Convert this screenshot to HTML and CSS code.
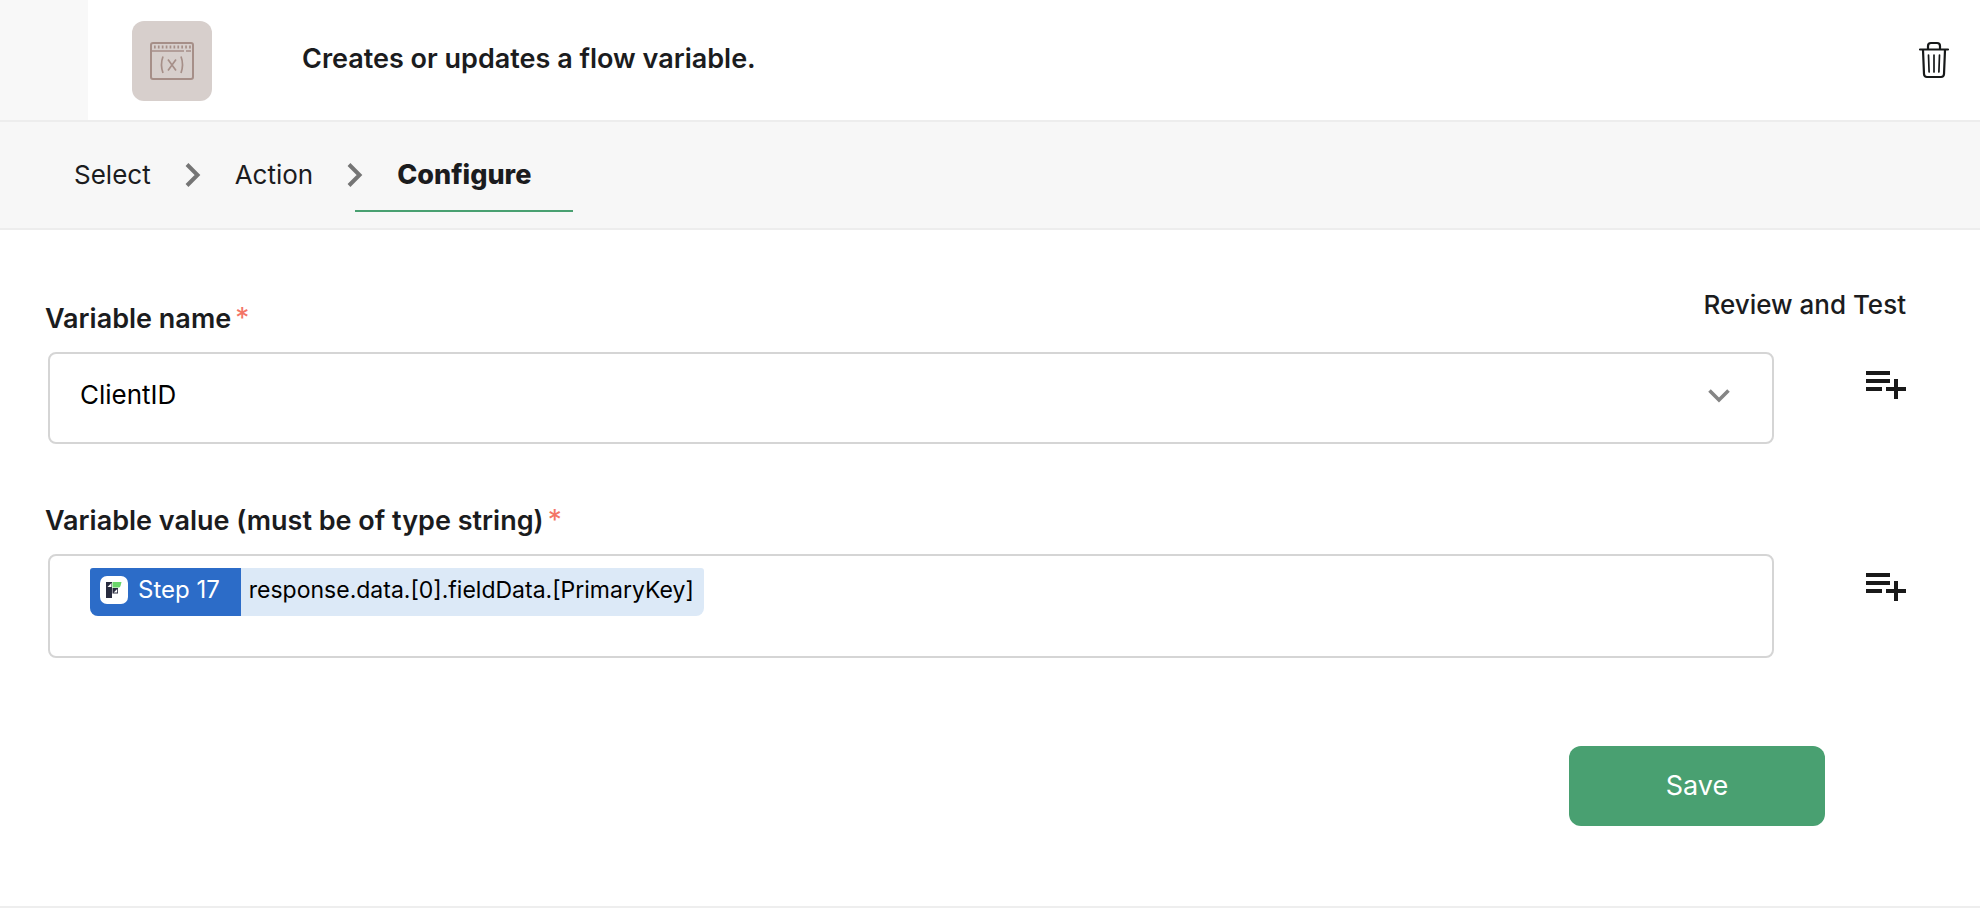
FILE: index.html
```html
<!DOCTYPE html>
<html lang="en">
<head>
<meta charset="utf-8">
<meta name="viewport" content="width=device-width, initial-scale=1">
<title>Configure flow variable</title>
<link rel="stylesheet" href="styles.css">
</head>
<body>
<div class="panel">
  <header class="header">
    <div class="gutter"></div>
    <div class="header-main">
      <div class="app-icon">
        <svg viewBox="0 0 80 80" width="80" height="80" fill="none" stroke="#a68f88" stroke-width="2" aria-hidden="true">
          <rect x="19" y="22" width="42" height="36" rx="2"/>
          <path d="M19 30h33M54 30h5" stroke-width="1.6"/>
          <path d="M22 26h37" stroke-width="3" stroke-dasharray="1.7 2.2"/>
          <path d="M31 35.500q-3 8 0 16.500M49 35.500q3 8 0 16.500M36 38.500l8 11M44 38.500l-8 11" stroke-width="1.700"/>
        </svg>
      </div>
      <h1 class="title">Creates or updates a flow variable.</h1>
      <button class="icon-button" type="button" aria-label="Delete step">
        <svg viewBox="0 1 32 40" width="32" height="40" fill="none" stroke="#161819" stroke-width="2.200" stroke-linecap="round" stroke-linejoin="round" aria-hidden="true">
          <path d="M2 9.500h28M10 9V6q0-3 3-3h6q3 0 3 3v3M5 10l1 24q.2 3 3 3h14q2.800 0 3-3l1-24"/>
          <path d="M10.500 15l.6 17M16 15v17M21.500 15l-.6 17" stroke-width="1.700"/>
        </svg>
      </button>
    </div>
  </header>

  <nav class="steps" aria-label="Setup steps">
    <ol class="step-list">
      <li class="step"><a class="step-link" href="#select">Select</a>
        <svg class="step-arrow" viewBox="0 0 16 24" width="16" height="24" aria-hidden="true"><path d="M2 1.500l10.500 10.500L2 22.500" fill="none" stroke="#757575" stroke-width="4"/></svg>
      </li>
      <li class="step"><a class="step-link" href="#action">Action</a>
        <svg class="step-arrow" viewBox="0 0 16 24" width="16" height="24" aria-hidden="true"><path d="M2 1.500l10.500 10.500L2 22.500" fill="none" stroke="#757575" stroke-width="4"/></svg>
      </li>
      <li class="step"><a class="step-link current" href="#configure" aria-current="step">Configure</a></li>
    </ol>
  </nav>

  <form class="form">
    <div class="field-head">
      <label class="label" for="variable-name">Variable name<span class="required">*</span></label>
      <a class="review" href="#review">Review and Test</a>
    </div>
    <div class="field-row">
      <div class="control">
        <select class="box select" id="variable-name"><option>ClientID</option></select>
        <svg class="select-arrow" viewBox="0 0 22 14" width="22" height="14" aria-hidden="true"><path d="M1.500 1.500L11 11l9.500-9.500" fill="none" stroke="#858585" stroke-width="3.600"/></svg>
      </div>
      <button class="icon-button" type="button" aria-label="Insert data into variable name">
        <svg viewBox="0 0 24 24" width="48" height="48" fill="#191919" aria-hidden="true"><path d="M14 10H2v2h12v-2zm0-4H2v2h12V6zm4 8v-4h-2v4h-4v2h4v4h2v-4h4v-2h-4zM2 16h8v-2H2v2z"/></svg>
      </button>
    </div>

    <div class="field-head second">
      <span class="label" id="value-label">Variable value (must be of type string)<span class="required">*</span></span>
    </div>
    <div class="field-row">
      <div class="box value" role="textbox" tabindex="0" aria-labelledby="value-label">
        <span class="token">
          <span class="token-step">
            <svg viewBox="0 0 28 28" width="28" height="28" aria-hidden="true">
              <rect width="28" height="28" rx="7" fill="#fff"/>
              <path d="M6 6h6v16H6zM12.500 12h5.500v5.500h-5.500z" fill="#282b3e"/>
              <path d="M11.500 7v4h-4z" fill="#fff"/>
              <path d="M17.200 13v3.500h-3.500z" fill="#fff"/>
              <path d="M12.500 6h9l-1 4q-.5 1.500-2 1.500h-6z" fill="#6bd66b"/>
            </svg>
            <span>Step 17</span>
          </span>
          <span class="token-path">response.data.[0].fieldData.[PrimaryKey]</span>
        </span>
      </div>
      <button class="icon-button" type="button" aria-label="Insert data into variable value">
        <svg viewBox="0 0 24 24" width="48" height="48" fill="#191919" aria-hidden="true"><path d="M14 10H2v2h12v-2zm0-4H2v2h12V6zm4 8v-4h-2v4h-4v2h4v4h2v-4h4v-2h-4zM2 16h8v-2H2v2z"/></svg>
      </button>
    </div>

    <div class="actions"><button class="save" type="submit">Save</button></div>
  </form>
</div>
</body>
</html>
```

FILE: styles.css
```css
* {
  box-sizing: border-box;
}

body {
  margin: 0;
  background: #fff;
  color: #1b1c1e;
  font-family: Inter, "Liberation Sans", sans-serif;
  font-size: 27px;
  line-height: 32px;
}

button,
select {
  font: inherit;
  color: inherit;
}

a {
  color: inherit;
  text-decoration: none;
}

svg {
  display: block;
}

.panel {
  border-bottom: 2px solid #eee;
}

.header {
  display: flex;
  border-bottom: 2px solid #ededed;
}

.gutter {
  width: 88px;
  background: #f8f8f8;
}

.header-main {
  flex: 1;
  display: flex;
  align-items: center;
  padding: 21px 30px 19px 44px;
}

.app-icon {
  border-radius: 12px;
  background: #d7cfcc;
}

.title {
  flex: 1;
  margin: 0;
  padding: 0 0 4px 90px;
  font-size: 27px;
  font-weight: 600;
}

.icon-button {
  padding: 0;
  border: 0;
  background: none;
  cursor: pointer;
}

.steps {
  padding: 0 32px 16px;
  background: #f7f7f7;
  border-bottom: 2px solid #ededed;
}

.step-list {
  display: flex;
  margin: 0;
  padding: 0;
  list-style: none;
}

.step {
  position: relative;
}

.step-link {
  display: block;
  padding: 37px 42px 19px;
  border-bottom: 2px solid transparent;
  font-size: 26px;
}

.current {
  border-color: #49a071;
  font-size: 27px;
  font-weight: 800;
}

.step-arrow {
  position: absolute;
  top: 41px;
  right: -8px;
}

.form {
  padding: 59px 70px 80px 45px;
}

.field-head {
  display: flex;
  justify-content: space-between;
  padding-bottom: 17px;
}

.second {
  padding-top: 61px;
}

.label {
  padding-top: 14px;
  font-weight: 600;
}

.second .label {
  padding-top: 0;
}

.required {
  padding-left: 4px;
  color: #f37566;
  font-size: 28px;
  font-weight: 400;
  line-height: 24px;
}

.review {
  padding-right: 4px;
  font-size: 26px;
  font-weight: 500;
}

.field-row {
  display: flex;
  align-items: flex-start;
  gap: 88px;
  padding-left: 3px;
}

.field-row .icon-button {
  padding-top: 7px;
}

.control {
  position: relative;
  flex: 1;
}

.box {
  width: 100%;
  border: 2px solid #d5d5d5;
  border-radius: 8px;
  background: #fff;
  color: #000;
}

.select {
  display: block;
  height: 92px;
  padding: 0 80px 6px 30px;
  font-size: 26px;
  appearance: none;
}

.select-arrow {
  position: absolute;
  top: 37px;
  right: 44px;
  pointer-events: none;
}

.value {
  flex: 1;
  min-height: 104px;
  padding: 12px 40px;
}

.token {
  display: inline-flex;
  overflow: hidden;
  border-radius: 3px 3px 8px 8px;
  background: #dce9f7;
  font-size: 23px;
}

.token-step {
  display: flex;
  align-items: center;
  gap: 10px;
  padding: 0 21px 4px 10px;
  background: #2c6cc8;
  color: #fff;
  font-size: 24px;
}

.token-path {
  padding: 6px 10px 10px 8px;
}

.actions {
  display: flex;
  justify-content: flex-end;
  padding: 88px 85px 0 0;
}

.save {
  width: 256px;
  height: 80px;
  border: 0;
  border-radius: 12px;
  background: #49a071;
  color: #fff;
  cursor: pointer;
}
```
